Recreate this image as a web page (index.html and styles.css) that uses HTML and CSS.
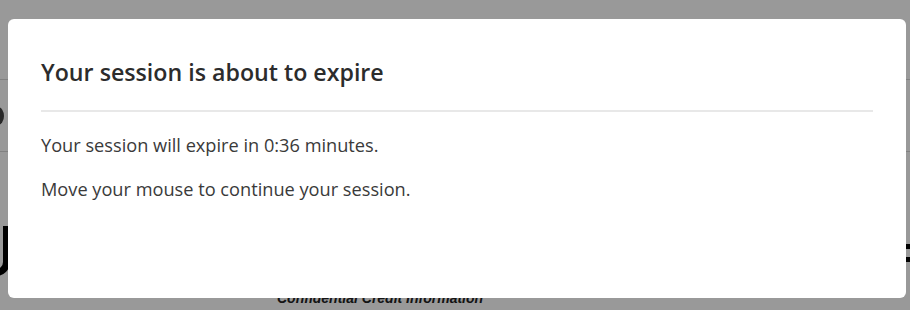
FILE: index.html
```html
<!DOCTYPE html>
<html lang="en">
<head>
    <meta charset="UTF-8">
    <meta name="viewport" content="width=device-width, initial-scale=1.0">
    <title>Session timeout</title>
    <link rel="stylesheet" href="styles.css">
</head>
<body>
    <!-- Page behind the modal -->
    <div class="page">
        <div class="page-top"></div>
        <div class="page-header">
            <span class="header-glyph"></span>
        </div>
        <div class="page-body">
            <span class="logo-mark"></span>
            <span class="side-marks">
                <i></i>
                <i></i>
            </span>
        </div>
        <div class="page-footer">
            <span class="footer-note">Confidential Credit Information</span>
        </div>
    </div>

    <div class="overlay"></div>

    <div class="modal" role="dialog" aria-labelledby="modal-title">
        <h2 class="modal-title" id="modal-title">Your session is about to expire</h2>
        <div class="modal-divider"></div>
        <div class="modal-content">
            <p>Your session will expire in 0:36 minutes.</p>
            <p>Move your mouse to continue your session.</p>
        </div>
    </div>
</body>
</html>
```

FILE: styles.css
```css
* {
    margin: 0;
    padding: 0;
    box-sizing: border-box;
}

body {
    font-family: 'Open Sans', 'Noto Sans', sans-serif;
    background: #fff;
    width: 910px;
    height: 310px;
    overflow: hidden;
}

/* Background page */
.page {
    height: 310px;
    display: flex;
    flex-direction: column;
}

.page-top {
    height: 80px;
    border-bottom: 1px solid #d8d8d8;
}

.page-header {
    height: 72px;
    border-bottom: 1px solid #d8d8d8;
    display: flex;
    align-items: center;
}

.header-glyph {
    width: 12px;
    height: 18px;
    margin-left: -8px;
    border-radius: 50%;
    background: #444;
}

.page-body {
    flex: 1;
    display: flex;
    justify-content: space-between;
    align-items: flex-end;
    padding-bottom: 10px;
}

.logo-mark {
    width: 30px;
    height: 50px;
    margin-left: -20px;
    border: 7px solid #000;
    border-top: none;
    border-radius: 0 0 14px 14px;
}

.side-marks {
    display: flex;
    flex-direction: column;
    gap: 8px;
    margin-right: -3px;
    margin-bottom: 14px;
}

.side-marks i {
    width: 7px;
    height: 5px;
    background: #000;
}

.page-footer {
    height: 24px;
    padding-left: 277px;
}

.footer-note {
    font-family: 'Liberation Sans', Arial, sans-serif;
    font-style: italic;
    font-weight: bold;
    font-size: 14px;
    color: #222;
    line-height: 22px;
}

.overlay {
    position: fixed;
    inset: 0;
    background: rgba(0, 0, 0, 0.4);
}

/* Modal */
.modal {
    position: fixed;
    left: 8px;
    top: 19px;
    width: 898px;
    height: 279px;
    background: #fff;
    border-radius: 6px;
    padding: 34px 33px 0;
}

.modal-title {
    font-size: 23.2px;
    font-weight: 600;
    color: #2c2c2c;
    line-height: 38px;
}

.modal-divider {
    height: 2px;
    background: #e8e8e8;
    margin-top: 19px;
}

.modal-content {
    padding-top: 22px;
    color: #3a3a3a;
    font-size: 18.2px;
    line-height: 22px;
}

.modal-content p + p {
    margin-top: 22px;
}
```
